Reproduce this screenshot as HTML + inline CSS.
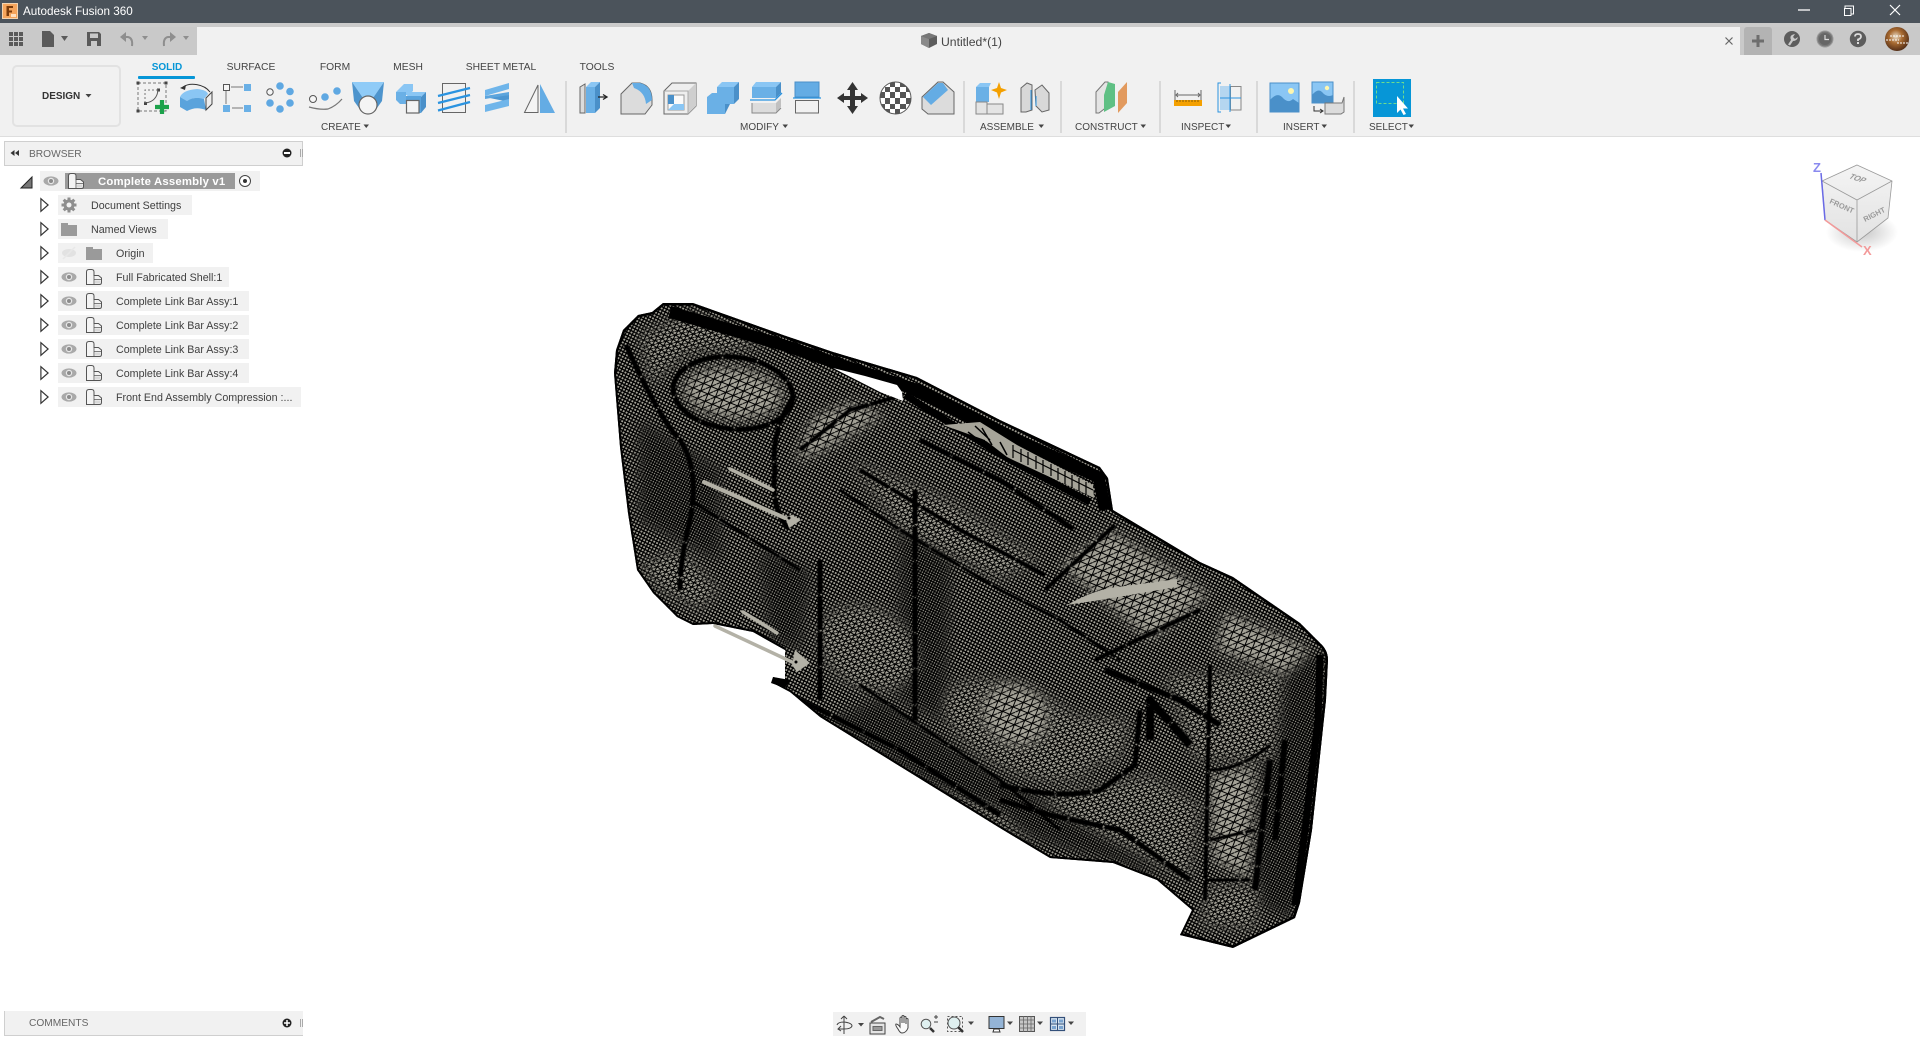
<!DOCTYPE html>
<html><head><meta charset="utf-8"><title>Autodesk Fusion 360</title>
<style>
html,body{margin:0;padding:0;width:1920px;height:1040px;overflow:hidden;background:#fff;font-family:"Liberation Sans",sans-serif;}
.a{position:absolute;white-space:nowrap}
svg{position:absolute;left:0;top:0}
.row{position:absolute;left:58px;height:20px;background:#f1f1f1}
.t{position:absolute;font-size:10.7px;color:#3f3f3f;white-space:nowrap;line-height:14px}
.tab{position:absolute;top:60.500px;font-size:10.300px;color:#444;line-height:13px;transform:translateX(-50%);white-space:nowrap}
.lb{position:absolute;top:121px;font-size:10px;color:#444;line-height:14px;white-space:nowrap}
</style></head><body>
<div class="a" style="left:0;top:0;width:1920px;height:23px;background:#4b535b"></div>
<div class="a" style="left:0;top:23px;width:1920px;height:4px;background:#cbcbcb"></div>
<div class="a" style="left:0;top:27px;width:1920px;height:109px;background:#f1f1f1"></div>
<div class="a" style="left:0;top:27px;width:197px;height:28px;background:#c9c9c9"></div>
<div class="a" style="left:1740px;top:27px;width:180px;height:28px;background:#c9c9c9"></div>
<div class="a" style="left:1744px;top:27px;width:28px;height:28px;background:#b3b3b3;border-radius:3px 3px 0 0"></div>
<div class="a" style="left:0;top:136px;width:1920px;height:1px;background:#dedede"></div>
<div class="a" style="left:23px;top:3px;font-size:11.700px;line-height:17px;color:#fff">Autodesk Fusion 360</div>
<div class="a" style="left:941px;top:34.500px;font-size:12.200px;line-height:15px;color:#444">Untitled*(1)</div>
<div class="a" style="left:12px;top:65px;width:105px;height:58px;border:2px solid #e2e2e2;border-radius:5px"></div>
<div class="a" style="left:42px;top:90px;font-size:10.500px;font-weight:bold;line-height:13px;color:#333;transform:scaleX(.95);transform-origin:left">DESIGN</div>
<div class="tab" style="left:167px;color:#0696d7;font-weight:bold;font-size:10px">SOLID</div>
<div class="tab" style="left:251px">SURFACE</div>
<div class="tab" style="left:335px">FORM</div>
<div class="tab" style="left:408px">MESH</div>
<div class="tab" style="left:501px">SHEET METAL</div>
<div class="tab" style="left:597px">TOOLS</div>
<div class="a" style="left:138px;top:76px;width:57px;height:3px;background:#0696d7;border-radius:1px"></div>
<div class="lb" style="left:321px">CREATE</div>
<div class="lb" style="left:740px">MODIFY</div>
<div class="lb" style="left:980px">ASSEMBLE</div>
<div class="lb" style="left:1075px">CONSTRUCT</div>
<div class="lb" style="left:1181px">INSPECT</div>
<div class="lb" style="left:1283px">INSERT</div>
<div class="lb" style="left:1369px">SELECT</div>

<!-- browser -->
<div class="a" style="left:4px;top:141px;width:297px;height:23px;border:1px solid #cfcfcf;background:#f1f1f1"></div>
<div class="a" style="left:29px;top:147.500px;font-size:10.200px;line-height:13px;color:#666">BROWSER</div>
<div class="row" style="left:40px;top:171px;width:220px"></div>
<div class="a" style="left:65px;top:173px;width:170px;height:16px;background:#9a9a9a"></div>
<div class="a" style="left:98px;top:174.500px;font-size:11.350px;font-weight:bold;color:#fff;line-height:14px;letter-spacing:.18px">Complete Assembly v1</div>
<div class="row" style="top:195px;width:134px"></div><div class="t" style="left:91px;top:198.500px">Document Settings</div>
<div class="row" style="top:219px;width:110px"></div><div class="t" style="left:91px;top:222.500px">Named Views</div>
<div class="row" style="top:243px;width:95px"></div><div class="t" style="left:116px;top:246.500px">Origin</div>
<div class="row" style="top:267px;width:171px"></div><div class="t" style="left:116px;top:270.500px">Full Fabricated Shell:1</div>
<div class="row" style="top:291px;width:191px"></div><div class="t" style="left:116px;top:294.500px">Complete Link Bar Assy:1</div>
<div class="row" style="top:315px;width:191px"></div><div class="t" style="left:116px;top:318.500px">Complete Link Bar Assy:2</div>
<div class="row" style="top:339px;width:191px"></div><div class="t" style="left:116px;top:342.500px">Complete Link Bar Assy:3</div>
<div class="row" style="top:363px;width:191px"></div><div class="t" style="left:116px;top:366.500px">Complete Link Bar Assy:4</div>
<div class="row" style="top:387px;width:243px"></div><div class="t" style="left:116px;top:390.500px">Front End Assembly Compression :...</div>
<!-- comments -->
<div class="a" style="left:4px;top:1011px;width:298px;height:24px;border-left:1px solid #cfcfcf;border-bottom:1px solid #cfcfcf;background:#f1f1f1"></div>
<div class="a" style="left:29px;top:1017px;font-size:10.200px;line-height:13px;color:#666">COMMENTS</div>
<!-- nav bar -->
<div class="a" style="left:833px;top:1012px;width:253px;height:24px;background:#f1f1f1"></div>

<svg width="1920" height="1040" viewBox="0 0 1920 1040" xmlns="http://www.w3.org/2000/svg">
<defs>
<pattern id="d" width="3.2" height="3.2" patternUnits="userSpaceOnUse" patternTransform="rotate(27)"><rect width="3.2" height="3.2" fill="#a3a196"/><path d="M0,1.6H3.2M1.6,0V3.2" stroke="#000" stroke-width="1.3"/></pattern>
<pattern id="dd" width="2.6" height="2.6" patternUnits="userSpaceOnUse" patternTransform="rotate(27)"><rect width="2.6" height="2.6" fill="#a3a196"/><path d="M0,1.3H2.6M1.3,0V2.6" stroke="#000" stroke-width="1.4"/></pattern>
<pattern id="v" width="3.4" height="3.4" patternUnits="userSpaceOnUse"><rect width="3.4" height="3.4" fill="#a3a196"/><path d="M0,1.7H3.4M1.7,0V3.4" stroke="#000" stroke-width="1.4"/></pattern>
<pattern id="m" width="5" height="5" patternUnits="userSpaceOnUse" patternTransform="rotate(30)"><rect width="5" height="5" fill="#a3a196"/><path d="M0,2.5H5M2.500,0V5M0,5L5,0" stroke="#000" stroke-width="1"/></pattern>
<pattern id="c" width="8" height="8" patternUnits="userSpaceOnUse" patternTransform="rotate(22)"><rect width="8" height="8" fill="#a6a499"/><path d="M0,4H8M4,0V8M0,8L8,0" stroke="#000" stroke-width="1"/></pattern>
<clipPath id="car"><path d="M614,373L616,350L623,330L638,315L652,312L663,303L693,303L783,335L833,352L917,377L1000,420L1100,467L1108,478L1113,510L1200,562L1233,577L1300,623L1320,643Q1328,650 1328,660L1326,700L1312,830L1300,903L1295,918L1233,948L1180,935L1192,910L1157,880L1113,863L1050,858L1000,828L820,717L790,692L773,683L773,677L785,680L785,650L753,632L713,624L693,625L677,617L653,593L637,570L628,513L620,447Z"/></clipPath>
<filter id="b5" x="-20%" y="-20%" width="140%" height="140%"><feGaussianBlur stdDeviation="6"/></filter>
<filter id="b1" x="-5%" y="-5%" width="110%" height="110%"><feGaussianBlur stdDeviation=".6"/></filter>
<mask id="mm" maskUnits="userSpaceOnUse" x="600" y="290" width="740" height="670"><g fill="#fff" filter="url(#b5)">
<ellipse cx="1020" cy="730" rx="82" ry="42" transform="rotate(25 1020 730)"/>
<ellipse cx="868" cy="648" rx="52" ry="40" transform="rotate(30 868 648)"/>
<path d="M640,335L690,312L770,345L735,352L690,352L650,385Z"/>
<path d="M850,460L950,500L1040,560L1000,580L900,530Z"/>
<path d="M1165,675L1285,670L1275,760L1195,760Z"/>
<path d="M1040,800L1100,835L1190,880L1200,805L1150,775L1080,790Z"/>
<path d="M640,565L680,548L720,590L700,610L660,590Z"/>
<path d="M1210,885L1260,885L1255,930L1200,925Z"/>
<path d="M1070,715L1130,720L1120,760L1060,770Z"/>
<path d="M920,780L1000,810L1040,850L1000,830Z"/>
</g></mask>
<mask id="mc" maskUnits="userSpaceOnUse" x="600" y="290" width="740" height="670"><g fill="#fff" filter="url(#b5)">
<ellipse cx="733" cy="393" rx="50" ry="26" transform="rotate(6 733 393)"/>
<path d="M795,462L812,418L850,402L885,415L825,450Z"/>
<path d="M1060,565L1112,530L1210,595L1150,640Z"/>
<path d="M1225,610L1310,650L1285,675L1215,650Z"/>
<path d="M1210,775L1255,765L1250,880L1213,860Z"/>
<ellipse cx="1015" cy="715" rx="35" ry="30" transform="rotate(30 1015 715)"/>
</g></mask>
<mask id="md" maskUnits="userSpaceOnUse" x="600" y="290" width="740" height="670"><g fill="#fff" filter="url(#b5)">
<path d="M640,420L720,470L720,560L640,520Z"/>
<path d="M900,520L950,560L945,720L900,700Z"/>
<path d="M1270,680L1325,650L1320,830L1290,920L1255,900Z"/>
<path d="M830,720L1000,828L1120,862L1170,880L1120,840L1000,780L880,700Z"/>
<path d="M760,550L810,570L800,650L770,640Z"/>
</g></mask>
<radialGradient id="av" cx=".45" cy=".4" r=".7"><stop offset="0" stop-color="#e8dcc8"/><stop offset=".4" stop-color="#a86a30"/><stop offset="1" stop-color="#3a1c10"/></radialGradient>
<radialGradient id="sh" cx=".5" cy=".5" r=".5"><stop offset="0" stop-color="#999" stop-opacity=".55"/><stop offset="1" stop-color="#999" stop-opacity="0"/></radialGradient>
<linearGradient id="cube" x1="0" y1="0" x2="0" y2="1"><stop offset="0" stop-color="#f4f4f4"/><stop offset="1" stop-color="#e2e2e2"/></linearGradient>
<symbol id="eye" viewBox="0 0 16 10" overflow="visible"><ellipse cx="8" cy="5" rx="7.5" ry="4.6" fill="#a9a9a9"/><circle cx="8" cy="5" r="3.2" fill="#e8e8e8"/><circle cx="8" cy="5" r="2" fill="#8c8c8c"/></symbol>
<symbol id="comp" viewBox="0 0 16 16" overflow="visible"><path d="M.5,15.500V3Q.5,.5 3,.5H5.500Q8,.5 8,3V6.500H12.500L15.500,9V13.500Q15.500,15.500 13.500,15.500Z" fill="#f4f4f4" stroke="#555" stroke-width="1"/><path d="M8,6.500V15.500M8,10.500H15.500" fill="none" stroke="#555" stroke-width=".8"/><path d="M9,11.500H14.500V14.500H9Z" fill="#d8d8d8"/></symbol>
<symbol id="arr" viewBox="0 0 10 16" overflow="visible"><path d="M1,1L9,8L1,15Z" fill="#fff" stroke="#333" stroke-width="1.3"/></symbol>
</defs>

<!-- title bar -->
<rect x="2" y="3" width="16" height="16" fill="#f2d3b0"/><rect x="3" y="4" width="14" height="14" fill="#f6a55c"/><path d="M6.5,6H13V8H9V10.500H12V12.500H9V16H6.500Z" fill="#7a3a0a"/><rect x="11" y="14" width="5" height="3" fill="#ffe0c0"/>
<path d="M1798,10H1810" stroke="#fff" stroke-width="1.300"/>
<path d="M1845,8.500V6H1853.500V14H1851M1844.500,8.500H1851V15.500H1844.500Z" fill="none" stroke="#fff" stroke-width="1"/>
<path d="M1890,5L1900,15M1900,5L1890,15" stroke="#fff" stroke-width="1.200"/>

<!-- quick access -->
<g fill="#5a5a5a"><rect x="9" y="32" width="4" height="4"/><rect x="14" y="32" width="4" height="4"/><rect x="19" y="32" width="4" height="4"/><rect x="9" y="37" width="4" height="4"/><rect x="14" y="37" width="4" height="4"/><rect x="19" y="37" width="4" height="4"/><rect x="9" y="42" width="4" height="4"/><rect x="14" y="42" width="4" height="4"/><rect x="19" y="42" width="4" height="4"/>
<path d="M42,31H50L54,35V47H42Z"/><path d="M61,36H68L64.500,41Z"/>
<path d="M87,32H99L101,34V46H87ZM90,33.500V38H98V33.500ZM91,41V46H97V41Z" fill-rule="evenodd"/></g>
<g fill="none" stroke="#8e8e8e" stroke-width="2"><path d="M122,37H128Q133,38 132,46"/><path d="M174,37H168Q163,38 164,46"/></g>
<g fill="#8e8e8e"><path d="M126,32V42L120,37Z"/><path d="M170,32V42L176,37Z"/><path d="M142,36H148L145,40Z"/><path d="M183,36H189L186,40Z"/></g>

<!-- doc title cube -->
<path d="M921,36L929,33L937,36V44L929,48L921,44Z" fill="#5d5d5d"/><path d="M921,36L929,39V48L921,44Z" fill="#8a8a8a"/><path d="M921,36L929,33L937,36L929,39Z" fill="#777"/>
<path d="M1725.500,37.500L1732.500,44.500M1732.500,37.500L1725.500,44.500" stroke="#666" stroke-width="1.200"/>
<path d="M1758,35V47M1752,41H1764" stroke="#6e6e6e" stroke-width="3"/>
<circle cx="1792" cy="39" r="8" fill="#5d5d5d"/><path d="M1788,44.500L1791,40Q1789,36 1793,34.500L1795,34L1793,37L1795,39L1798,37Q1797,41 1793,41L1790,45.500Z" fill="#c9c9c9"/>
<circle cx="1825" cy="39" r="8" fill="#777" stroke="#9a9a9a" stroke-width="1"/><circle cx="1825" cy="39" r="6" fill="#666"/><path d="M1825,35V39.500H1829" stroke="#ddd" fill="none" stroke-width="1.200"/>
<circle cx="1858" cy="39" r="8.200" fill="#5d5d5d"/><path d="M1855,36.500Q1855,34 1858,34Q1861,34 1861,36.500Q1861,38.500 1858,39.500V41" fill="none" stroke="#ddd" stroke-width="1.800"/><rect x="1857" y="42" width="2" height="2" fill="#ddd"/>
<circle cx="1897" cy="39" r="12" fill="url(#av)"/><path d="M1886,40H1899M1890,36H1905M1897,43H1908" stroke="#fff" stroke-width="1" stroke-dasharray="2 1"/>

<!-- design arrow -->
<path d="M85.500,94H91.500L88.500,97.500Z" fill="#444"/>
<!-- label arrows -->
<g fill="#444"><path d="M363.500,124.500H369L366.250,128Z"/><path d="M782.500,124.500H788L785.250,128Z"/><path d="M1038.500,124.500H1044L1041.250,128Z"/><path d="M1140.500,124.500H1146L1143.250,128Z"/><path d="M1225.500,124.500H1231L1228.250,128Z"/><path d="M1321.500,124.500H1327L1324.250,128Z"/><path d="M1408.500,124.500H1414L1411.250,128Z"/></g>
<!-- separators -->
<g stroke="#d9d9d9" stroke-width="2"><path d="M566,81V133M964,81V133M1061,81V133M1160,81V133M1257,81V133M1354,81V133"/></g>

<!-- Sketch -->
<path d="M138,83H166V111H138Z" fill="none" stroke="#777" stroke-width="1" stroke-dasharray="3 2"/>
<g fill="#444"><rect x="136.500" y="81.500" width="3" height="3"/><rect x="164.500" y="81.500" width="3" height="3"/><rect x="136.500" y="109.500" width="3" height="3"/><rect x="157" y="88.500" width="3" height="3"/><rect x="144" y="102" width="3" height="3"/></g>
<path d="M158,90Q157,101 146,103" fill="none" stroke="#555" stroke-width="1"/><path d="M145,103V90H158" fill="none" stroke="#777" stroke-dasharray="2 2"/>
<path d="M162,100V114M155,107H169" stroke="#1ca24b" stroke-width="4.200"/>
<!-- Revolve -->
<path d="M210,92C204,84 190,82 183,87" fill="none" stroke="#333" stroke-width="1"/><path d="M180,88L186,85L185,90Z" fill="#333"/>
<path d="M180,97Q183,90 197,89Q207,90 208,94L204,99Q194,96 187,101Z" fill="#8ac6f4"/>
<path d="M180,97L187,101Q194,96 204,99L206,110Q196,106 187,111L180,107Z" fill="#5aa3dc"/>
<path d="M206,98L212,92V104L206,110Z" fill="#eee" stroke="#444" stroke-width="1"/>
<!-- Rect pts -->
<path d="M231,87H243M226,91V104M232,108H243" stroke="#777" stroke-width="1"/>
<rect x="223.500" y="84.500" width="6" height="6" fill="#f5f5f5" stroke="#555"/><rect x="244" y="84" width="7" height="7" fill="#6ab0e6"/><rect x="223" y="105" width="7" height="7" fill="#6ab0e6"/><rect x="244" y="105" width="7" height="7" fill="#6ab0e6"/>
<!-- dots -->
<circle cx="270" cy="92" r="3.200" fill="#f5f5f5" stroke="#555"/><g fill="#5fa8e2"><circle cx="280" cy="86" r="3.800"/><circle cx="290" cy="91.500" r="3.800"/><circle cx="290" cy="103" r="3.800"/><circle cx="280" cy="109" r="3.800"/><circle cx="270" cy="103" r="3.800"/></g>
<!-- spline -->
<circle cx="313" cy="99" r="3.500" fill="#f5f5f5" stroke="#555"/><circle cx="325" cy="97" r="3.800" fill="#5fa8e2"/><circle cx="337" cy="91" r="3.800" fill="#5fa8e2"/><path d="M309,107Q320,110 328,109Q336,106 342,99" fill="none" stroke="#777" stroke-width="1.200"/>
<!-- loft -->
<path d="M352,82H384L373,98H363Z" fill="#8fcbf7"/><path d="M352,82L363,98L359,108L354,101Z" fill="#4d94cd"/><path d="M384,82L373,98L377,108L382,101Z" fill="#4d94cd"/><circle cx="368" cy="105" r="9" fill="#f4f4f4" stroke="#666" stroke-width="1.200"/>
<!-- extrude -->
<path d="M396,92L404,84H413V91L408,95H396Z" fill="#8ac6f4"/><path d="M410,92H426L421,97H406Z" fill="#8ac6f4"/><path d="M396,92H406V104L400,104L396,100Z" fill="#6ab0e6"/><path d="M406,96H421V113H406Z" fill="#5aa3dc"/><path d="M421,97L426,92V107L421,113Z" fill="#4a90c9"/><rect x="406.500" y="100.500" width="12.500" height="12.500" fill="#f4f4f4" stroke="#666" stroke-width="1.200"/>
<!-- coil -->
<rect x="442.500" y="83.500" width="23" height="29" fill="none" stroke="#666"/><g stroke="#2a93e0" stroke-width="2.200"><path d="M438,96L470,88M438,103L470,95M438,110.500L470,102"/></g>
<!-- rib -->
<path d="M485,90L509,83V89L485,96Z" fill="#6fb5ea"/><path d="M485,96L509,95V102L485,97Z" fill="#4d97d2"/><path d="M485,105L509,99V106L485,112Z" fill="#6fb5ea"/><path d="M485,96V99L509,95V92Z" fill="#5ca5dd"/>
<!-- mirror -->
<path d="M524.500,112.500L538,85V112.500Z" fill="#f4f4f4" stroke="#666"/><path d="M540,84L555,113H540Z" fill="#64ace4"/>
<!-- presspull -->
<path d="M580,87L585,84V113H580Z" fill="#dcdcdc" stroke="#666"/><path d="M586,87L591,82H600L595,87Z" fill="#8ac6f4"/><path d="M586,87H595V113H586Z" fill="#6ab0e6"/><path d="M595,87L600,82V108L595,113Z" fill="#4a90c9"/><path d="M598,97H606M603,94.500L607,97L603,99.500" stroke="#222" fill="none" stroke-width="1.300"/>
<!-- fillet -->
<path d="M621,94L632,83H640Q652,86 652,100V105L645,114H621Z" fill="#dcdcdc" stroke="#666"/><path d="M632,83H640Q652,86 652,100L646,104Q645,92 634,88Z" fill="#64ace4"/>
<!-- shell -->
<path d="M664,91L672,83H696V106L688,114H664Z" fill="#eee" stroke="#666"/><path d="M688,91L696,83V106L688,114Z" fill="#cfcfcf"/><path d="M664,91H688V114" fill="none" stroke="#aaa"/><rect x="668" y="95" width="16" height="15" fill="#fafafa" stroke="#999"/><path d="M668,104H674V95H668Z" fill="#4a90c9"/><path d="M668,110L674,104H684V110Z" fill="#8ac6f4"/>
<!-- combine -->
<path d="M717,87L722,82H739L734,87Z" fill="#8ac6f4"/><path d="M717,87H734V104H717Z" fill="#6ab0e6"/><path d="M734,87L739,82V99L734,104Z" fill="#4a90c9"/><path d="M707,97L712,93H725V114H707Z" fill="#6ab0e6"/><path d="M725,104H730L725,114Z" fill="#4a90c9"/>
<!-- offset face -->
<path d="M752,87L756,82H781L776,87Z" fill="#8ac6f4"/><path d="M752,87H776V98H752Z" fill="#6ab0e6"/><path d="M776,87L781,82V93L776,98Z" fill="#4a90c9"/><path d="M750,100H775L782,93" stroke="#2a93e0" stroke-width="1.300" fill="none"/><path d="M752,103H776V113H752Z" fill="#dcdcdc"/><path d="M776,103L781,98V107L776,113Z" fill="#c0c0c0"/><path d="M752,103V113H776L781,108" fill="none" stroke="#888"/>
<!-- split -->
<rect x="795" y="82" width="24" height="15" fill="#64ace4" stroke="#4a90c9"/><path d="M793,98H821" stroke="#2a93e0" stroke-width="1.300"/><rect x="795.500" y="100.500" width="23" height="12.500" fill="#f1f1f1" stroke="#666"/>
<!-- move -->
<path d="M852.500,82L858,90H855V96H861V93L868,98L861,103V100H855V106H858L852.500,114L847,106H850V100H844V103L837,98L844,93V96H850V90H847Z" fill="#333"/>
<!-- checker -->
<ellipse cx="895.500" cy="98" rx="15.500" ry="16" fill="#fff" stroke="#555"/>
<clipPath id="chk"><ellipse cx="895.500" cy="98" rx="15.500" ry="16"/></clipPath>
<g clip-path="url(#chk)" fill="#555"><rect x="880" y="82" width="5" height="5"/><rect x="890" y="82" width="5" height="5"/><rect x="900" y="82" width="6" height="5"/><rect x="885" y="87" width="5" height="5"/><rect x="895" y="87" width="5" height="5"/><rect x="906" y="87" width="5" height="5"/><rect x="880" y="92" width="5" height="6"/><rect x="890" y="92" width="5" height="6"/><rect x="900" y="92" width="6" height="6"/><rect x="885" y="98" width="5" height="6"/><rect x="895" y="98" width="5" height="6"/><rect x="906" y="98" width="5" height="6"/><rect x="880" y="104" width="5" height="5"/><rect x="890" y="104" width="5" height="5"/><rect x="900" y="104" width="6" height="5"/><rect x="885" y="109" width="5" height="5"/><rect x="895" y="109" width="5" height="5"/></g>
<!-- chamfer -->
<path d="M922,97L938,82H943L954,92V114H928L922,109Z" fill="#dcdcdc" stroke="#666"/><path d="M923,97L938,83H943L948,90L931,105Z" fill="#64ace4"/>
<!-- new comp -->
<path d="M976,87L980,83H991L989,87Z" fill="#8ac6f4"/><rect x="976" y="87" width="13" height="15" fill="#6ab0e6"/><path d="M976,102H987V114H976Z" fill="#e4e4e4" stroke="#888"/><path d="M987,104H1003V114H987Z" fill="#e4e4e4" stroke="#888"/>
<path d="M999,82L1001,88L1007,90L1001,92.500L999,99L997,92.500L991,90L997,88Z" fill="#f4a000"/>
<!-- joint -->
<path d="M1021,88L1027,83L1032,85V110L1026,112H1021Z" fill="#d8d8d8" stroke="#666"/><path d="M1035,90L1042,85L1049,93V110L1042,112L1036,106Z" fill="#d8d8d8" stroke="#666"/><path d="M1031,90V110M1036,96V106" stroke="#2a93e0"/>
<!-- construct -->
<path d="M1096,92L1105,82H1108V106L1099,113H1096Z" fill="#e4e4e4" stroke="#777"/><path d="M1108,82L1115,84V106L1104,112V95Z" fill="#5fc084"/><path d="M1118,92L1127,82V103L1118,113Z" fill="#e29a5e"/>
<!-- inspect -->
<path d="M1175,90V100M1201,90V100M1177,95H1199" stroke="#666" fill="none"/><path d="M1178,93L1176,95L1178,97M1198,93L1200,95L1198,97" stroke="#666" fill="none"/><rect x="1174" y="100" width="28" height="6" fill="#f4a000"/><path d="M1177,100V102M1180,100V102M1183,100V102M1186,100V102M1189,100V102M1192,100V102M1195,100V102M1198,100V102" stroke="#8a5c00"/>
<rect x="1220" y="86" width="10" height="12" fill="#b5d6f0"/><rect x="1220" y="98" width="10" height="12" fill="#b5d6f0"/><rect x="1230.500" y="86.500" width="10.500" height="11.500" fill="none" stroke="#888"/><rect x="1230.500" y="98" width="10.500" height="12" fill="none" stroke="#888"/><path d="M1220,98H1241M1230,84V112" stroke="#2a93e0"/><path d="M1221,83H1218V112H1221" fill="none" stroke="#2a93e0"/>
<!-- insert -->
<rect x="1270" y="83" width="29" height="29" fill="#8ac6f4" stroke="#4a90c9"/><path d="M1270,112V100Q1277,92 1282,97Q1288,104 1293,99L1299,103V112Z" fill="#4a90c9"/><circle cx="1291" cy="91" r="3" fill="#fdf6b0"/>
<rect x="1312" y="82" width="21" height="21" fill="#8ac6f4" stroke="#4a90c9"/><path d="M1312,103V95Q1318,88 1322,92Q1327,98 1333,95V103Z" fill="#4a90c9"/><circle cx="1327" cy="88" r="2.200" fill="#fdf6b0"/><path d="M1325,103H1342L1344,97V112L1341,114H1325Z" fill="#dcdcdc" stroke="#777"/><path d="M1314,106V111H1322M1320,109L1323,111L1320,113" fill="none" stroke="#333"/>
<!-- select -->
<rect x="1373" y="79" width="38" height="38" fill="#0696d7"/><rect x="1376.500" y="82.500" width="27" height="21" fill="none" stroke="#6fdc8c" stroke-width="1" stroke-dasharray="3 2"/><path d="M1397,96V113L1400.500,109.500L1403.500,115L1406,114L1403,108.500H1408Z" fill="#fff"/>

<!-- browser icons -->
<path d="M19,150V156L15,153ZM14.500,150V156L10.500,153Z" fill="#333"/>
<circle cx="287" cy="153" r="4.500" fill="#222"/><rect x="284" y="152" width="6" height="2" fill="#fff"/><path d="M300.500,149V157M302.500,149V157" stroke="#aaa"/>
<path d="M21,188L32,177V188Z" fill="#777" stroke="#222" stroke-width="1"/>
<use href="#eye" x="43" y="176" width="16" height="10"/>
<use href="#comp" x="68" y="173" width="16" height="16"/>
<circle cx="245" cy="181" r="5.500" fill="#fff" stroke="#444" stroke-width="1"/><circle cx="245" cy="181" r="2" fill="#333"/>
<use href="#arr" x="40" y="197" width="9" height="16"/><use href="#arr" x="40" y="221" width="9" height="16"/><use href="#arr" x="40" y="245" width="9" height="16"/><use href="#arr" x="40" y="269" width="9" height="16"/><use href="#arr" x="40" y="293" width="9" height="16"/><use href="#arr" x="40" y="317" width="9" height="16"/><use href="#arr" x="40" y="341" width="9" height="16"/><use href="#arr" x="40" y="365" width="9" height="16"/><use href="#arr" x="40" y="389" width="9" height="16"/>
<!-- gear -->
<path d="M69,197.500V212.500M61.500,205H76.500M63.700,199.700L74.300,210.300M74.300,199.700L63.700,210.300" stroke="#8e8e8e" stroke-width="3"/><circle cx="69" cy="205" r="5.500" fill="#8e8e8e"/><circle cx="69" cy="205" r="2.500" fill="#f1f1f1"/>
<!-- folders -->
<path d="M61,223H68V225H77V236H61Z" fill="#9a9a9a"/>
<ellipse cx="69" cy="253" rx="7" ry="4" fill="#e2e2e2"/><path d="M63,259L75,247" stroke="#e8e8e8" stroke-width="1.500"/>
<path d="M86,247H93V249H102V260H86Z" fill="#9a9a9a"/>
<use href="#eye" x="61" y="272" width="16" height="10"/><use href="#eye" x="61" y="296" width="16" height="10"/><use href="#eye" x="61" y="320" width="16" height="10"/><use href="#eye" x="61" y="344" width="16" height="10"/><use href="#eye" x="61" y="368" width="16" height="10"/><use href="#eye" x="61" y="392" width="16" height="10"/>
<use href="#comp" x="86" y="269" width="16" height="16"/><use href="#comp" x="86" y="293" width="16" height="16"/><use href="#comp" x="86" y="317" width="16" height="16"/><use href="#comp" x="86" y="341" width="16" height="16"/><use href="#comp" x="86" y="365" width="16" height="16"/><use href="#comp" x="86" y="389" width="16" height="16"/>
<circle cx="287" cy="1023" r="4.500" fill="#222"/><path d="M284,1023H290M287,1020V1026" stroke="#fff" stroke-width="1.500"/><path d="M300.500,1019V1027M302.500,1019V1027" stroke="#aaa"/>

<!-- nav icons -->
<g stroke="#444" fill="none" stroke-width="1"><path d="M844,1016V1034M844,1016L841,1019M844,1016L847,1019M837,1025Q838,1022 844,1022Q852,1023 852,1026Q851,1029 844,1029H838M841,1026L838,1029L841,1031"/></g>
<path d="M858,1023H864L861,1026.500Z" fill="#444"/>
<rect x="870" y="1023" width="15" height="11" fill="#e4e4e4" stroke="#444"/><rect x="873" y="1026.500" width="9" height="4" fill="#999" stroke="#666"/><path d="M871,1022L880,1017L884,1019" fill="none" stroke="#666" stroke-width="2"/>
<path d="M898,1029Q895,1025 896,1024Q898,1024 900,1027V1018Q901,1016 902,1018V1023V1016Q903,1015 904,1016V1023V1017Q905,1016 906,1017V1024V1019Q907,1018 908,1019V1028Q906,1033 902,1033Q900,1033 898,1029Z" fill="#fafafa" stroke="#444"/>
<circle cx="926" cy="1024" r="4.800" fill="#dff0f0" stroke="#555"/><path d="M930,1028L934,1032" stroke="#333" stroke-width="2.500"/><path d="M934,1017H938M936,1015V1019M934,1022H938" stroke="#444" fill="none"/>
<rect x="947.500" y="1016.500" width="15" height="15" fill="none" stroke="#555" stroke-dasharray="2 2"/><circle cx="954" cy="1023" r="6" fill="#dff0f0" stroke="#555"/><path d="M958,1027L963,1032" stroke="#333" stroke-width="2.500"/>
<path d="M968,1021.500H974L971,1025Z" fill="#444"/>
<rect x="989" y="1016.500" width="15" height="12" fill="#94b4d6" stroke="#333"/><path d="M994,1029H999L1000,1032H993Z" fill="#fff" stroke="#333"/><path d="M1007,1021.500H1013L1010,1025Z" fill="#444"/>
<rect x="1019.500" y="1016.500" width="15" height="15" fill="#c6c6c6" stroke="#555"/><path d="M1023.500,1016V1032M1027.500,1016V1032M1031,1016V1032M1019,1020H1035M1019,1024H1035M1019,1028H1035" stroke="#666" stroke-width=".8"/><path d="M1037,1021.500H1043L1040,1025Z" fill="#444"/>
<rect x="1050.500" y="1017.500" width="14" height="13" fill="#d6e4f0" stroke="#33507a" stroke-width="1.200"/><path d="M1057.500,1017V1031M1050,1024H1065" stroke="#33507a"/><rect x="1052" y="1019.500" width="4" height="3" fill="#7aa4d0"/><rect x="1059" y="1019.500" width="4" height="3" fill="#7aa4d0"/><rect x="1052" y="1026" width="4" height="3" fill="#7aa4d0"/><rect x="1059" y="1026" width="4" height="3" fill="#7aa4d0"/><path d="M1068,1021.500H1074L1071,1025Z" fill="#444"/>

<!-- viewcube -->
<ellipse cx="1862" cy="232" rx="36" ry="20" fill="url(#sh)"/>
<path d="M1857,165L1892,181L1888,218L1857,242L1825,220L1822,181Z" fill="url(#cube)" stroke="#9a9a9a" stroke-width=".8"/>
<path d="M1822,181L1857,200L1892,181M1857,200V242" fill="none" stroke="#9a9a9a" stroke-width=".8"/>
<path d="M1821,173L1825,220" stroke="#6a6ae6" stroke-width="1.500"/><path d="M1825,220L1862,247" stroke="#f39a9a" stroke-width="1.500"/>
<text x="1813" y="172" font-size="13" font-weight="bold" fill="#8a8aef">Z</text><text x="1863" y="255" font-size="13" font-weight="bold" fill="#f39a9a">X</text>
<text font-size="8" fill="#999" font-weight="bold" transform="translate(1848,178) rotate(18) skewX(-25)">TOP</text>
<text font-size="7.500" fill="#999" font-weight="bold" transform="translate(1829,203) rotate(24)">FRONT</text>
<text font-size="7.500" fill="#999" font-weight="bold" transform="translate(1865,222) rotate(-27)">RIGHT</text>

<!-- CAR -->
<g clip-path="url(#car)">
<rect x="600" y="290" width="740" height="670" fill="url(#d)"/>
<rect x="600" y="290" width="740" height="670" fill="url(#dd)" mask="url(#md)"/>
<rect x="600" y="290" width="740" height="670" fill="url(#m)" mask="url(#mm)"/>
<rect x="600" y="290" width="740" height="670" fill="url(#c)" mask="url(#mc)"/>
</g>
<g clip-path="url(#car)" fill="none" stroke="#000" stroke-linejoin="round" stroke-linecap="butt">
<path d="M614,373L616,350L623,330L638,315L652,312L663,303L693,303L783,335L833,352L917,377L1000,420L1100,467L1108,478L1113,510L1200,562L1233,577L1300,623L1320,643Q1328,650 1328,660L1326,700L1312,830L1300,903L1295,918L1233,948L1180,935" stroke-width="5"/>
<path d="M1180,935L1192,910L1157,880L1113,863L1050,858L1000,828L820,717L790,692L773,683M785,650L753,632L713,624L693,625L677,617L653,593L637,570L628,513L620,447L614,373" stroke-width="4"/>
<path d="M670,312L783,345L833,362L917,390L1000,432L1100,478" stroke-width="12"/>
<path d="M1098,474L1105,510" stroke-width="12"/>
<path d="M905,395L945,420L1010,460L1090,502" stroke-width="7"/>
<path d="M1320,655L1318,720L1305,830L1295,905" stroke-width="7"/>
<g filter="url(#b1)" stroke-dasharray="34 2">
<ellipse cx="733" cy="393" rx="60" ry="36" stroke-width="5" transform="rotate(6 733 393)"/>
<path d="M626,345Q660,420 680,440Q700,470 690,520Q680,560 680,590" stroke-width="5"/>
<path d="M795,395Q770,430 775,470Q770,510 790,530" stroke-width="5"/>
<path d="M903,395L850,410L800,450" stroke-width="4"/>
<path d="M840,490L900,530L1000,590L1060,620L1120,660" stroke-width="3"/>
<path d="M860,470L960,530L1045,575" stroke-width="4"/>
<path d="M920,440L1000,480L1075,530" stroke-width="5"/>
<path d="M1045,590L1115,525" stroke-width="4"/>
<path d="M915,490V720" stroke-width="5"/>
<path d="M820,560V700" stroke-width="5"/>
<path d="M690,500L800,570" stroke-width="3"/>
<path d="M1105,670L1180,700L1220,725" stroke-width="6"/>
<path d="M1095,660L1200,610" stroke-width="4"/>
<path d="M1150,740V700L1190,745" stroke-width="8"/>
<path d="M1140,710L1135,765L1100,790Q1060,800 1000,785" stroke-width="5"/>
<path d="M1000,800L1050,815L1120,830L1190,880" stroke-width="5"/>
<path d="M1210,770Q1240,770 1270,745M1210,840L1255,830M1205,880L1250,880" stroke-width="3"/>
<path d="M1210,665L1205,900" stroke-width="4"/>
<path d="M1270,760L1255,890M1285,740L1275,840" stroke-width="6"/>
<path d="M860,685L1000,780L1060,830" stroke-width="3"/>
<path d="M800,700L900,750L1000,815" stroke-width="5"/>
</g>
</g>
<!-- windshield hole -->
<path d="M833,368L865,376L897,385L902,392L903,401L880,392Z" fill="#fff"/>
<!-- slot -->
<path d="M943,425L980,422L1017,445L1093,485L1094,498L1067,485L1013,460L1007,457L985,440Z" fill="#a6a499"/>
<path d="M1013,445L1013,458M1021,449V462M1028,452V465M1036,456V469M1043,460V473M1051,464V476M1058,468V480M1065,471V484M1072,475V488M1079,478V491M1086,482V494M1013,450L1093,490" stroke="#000" stroke-width="1.200" fill="none"/>
<path d="M968,432L985,445M982,428L992,445M1000,442L1007,455M975,426L990,440" stroke="#000" fill="none" stroke-width="1.500"/>
<!-- rods -->
<g stroke="#b3b1a6" fill="none" stroke-linecap="round">
<path d="M704,482L785,518" stroke-width="4"/>
<path d="M730,469L773,490" stroke-width="3.500"/>
<path d="M715,626L792,662" stroke-width="3.500"/>
<path d="M743,612L777,633" stroke-width="3.500"/>
</g>
<path d="M785,517L792,515L801,520L789,528Z" fill="#b3b1a6"/><circle cx="789" cy="518" r="1.500" fill="#000"/>
<path d="M795,650L810,663L797,672L792,665Z" fill="#b3b1a6"/><circle cx="796" cy="662" r="1.500" fill="#000"/>
<path d="M1067,605Q1090,592 1110,588L1177,579L1177,587L1100,600Z" fill="#b3b1a6"/>
<path d="M773,677L771,683L785,688L790,680Z" fill="#000"/>
</svg>
</body></html>
